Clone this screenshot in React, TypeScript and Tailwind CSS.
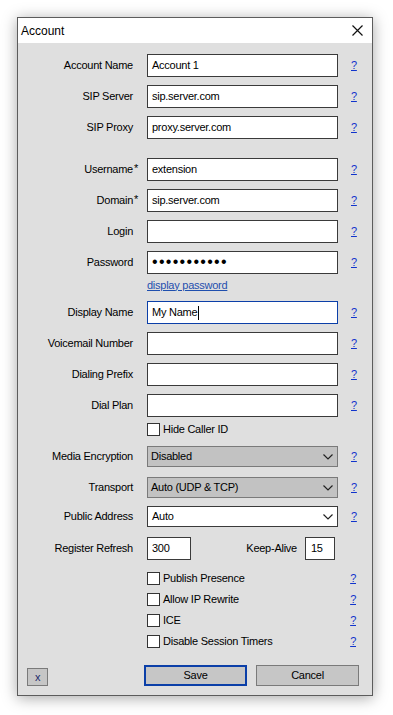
import React, { type ReactElement, type ReactNode } from "react";

const font = { fontFamily: '"Liberation Sans", Arial, sans-serif' };

const Help = (): ReactElement => (
  <span className="ml-[13px] text-[11px] text-[#1033cc] underline leading-none">?</span>
);

const Chevron = (): ReactElement => (
  <svg width="10" height="6" viewBox="0 0 10 6" className="ml-auto mr-[4px]">
    <polyline points="0.5,0.5 5,5 9.5,0.5" fill="none" stroke="#222" strokeWidth="1.2" />
  </svg>
);

const Label = ({ children }: { children: ReactNode }): ReactElement => (
  <div className="w-[115px] shrink-0 text-right">{children}</div>
);

const Field = ({
  label,
  value,
  star,
  mt,
}: {
  label: string;
  value?: ReactNode;
  star?: boolean;
  mt: string;
}): ReactElement => (
  <div className={`flex items-center h-[23px] ${mt}`}>
    <Label>
      {label}
      {star && <span className="absolute ml-[1px] -mt-[1px]">*</span>}
    </Label>
    <div className="ml-[14px] w-[191px] h-[23px] bg-white border border-[#3a3a3a] flex items-center px-[4px]">
      {value}
    </div>
    <Help />
  </div>
);

const Select = ({
  label,
  value,
  white,
  mt,
}: {
  label: string;
  value: string;
  white?: boolean;
  mt: string;
}): ReactElement => (
  <div className={`flex items-center h-[21px] ${mt}`}>
    <Label>{label}</Label>
    <div
      className={
        white
          ? "ml-[14px] w-[191px] h-[21px] bg-white border border-[#3a3a3a] flex items-center pl-[4px]"
          : "ml-[14px] w-[191px] h-[21px] bg-[#c2c2c2] border border-[#7a7a7a] flex items-center pl-[3px]"
      }
    >
      {value}
      <Chevron />
    </div>
    <Help />
  </div>
);

const Check = ({ label, help, mt }: { label: string; help?: boolean; mt?: string }): ReactElement => (
  <div className={`flex items-center h-[21px] pl-[129px] ${mt ?? ""}`}>
    <div className="w-[13px] h-[13px] bg-white border border-[#333]" />
    <span className="ml-[3px]">{label}</span>
    {help && (
      <span className="ml-auto mr-[16px] text-[11px] text-[#1033cc] underline leading-none">?</span>
    )}
  </div>
);

const App = (): ReactElement => {
  return (
    <div className="w-[393px] h-[715px] bg-white pt-[17px] pl-[17px]" style={font}>
      <div className="w-[356px] h-[679px] border border-[#5c5c5c] flex flex-col shadow-[0_2px_14px_rgba(0,0,0,0.35)] text-[11px] tracking-[-0.25px] text-black">
        <div className="h-[25px] bg-white flex items-center pl-[3px] pr-[9px]">
          <span className="text-[12px] tracking-normal">Account</span>
          <svg width="11" height="11" viewBox="0 0 11 11" className="ml-auto">
            <path d="M0.5 0.5 L10.5 10.5 M10.5 0.5 L0.5 10.5" stroke="#111" strokeWidth="1.2" />
          </svg>
        </div>
        <div className="flex-1 bg-[#dfdfdf] flex flex-col">
          <Field label="Account Name" value="Account 1" mt="mt-[11px]" />
          <Field label="SIP Server" value="sip.server.com" mt="mt-[8px]" />
          <Field label="SIP Proxy" value="proxy.server.com" mt="mt-[8px]" />

          <Field label="Username" star value="extension" mt="mt-[19px]" />
          <Field label="Domain" star value="sip.server.com" mt="mt-[8px]" />
          <Field label="Login" mt="mt-[8px]" />
          <Field
            label="Password"
            value={<span className="text-[16px] tracking-[1.3px] leading-none -mt-[1px]">•••••••••••</span>}
            mt="mt-[8px]"
          />
          <div className="mt-[4px] h-[14px] pl-[129px] flex items-center">
            <span className="text-[#1f4fae] underline">display password</span>
          </div>

          <div className="flex items-center h-[23px] mt-[9px]">
            <Label>Display Name</Label>
            <div className="ml-[14px] w-[191px] h-[23px] bg-white border border-[#0b3fa8] flex items-center px-[4px]">
              My Name
              <span className="ml-[1px] w-[1px] h-[14px] bg-black" />
            </div>
            <Help />
          </div>
          <Field label="Voicemail Number" mt="mt-[8px]" />
          <Field label="Dialing Prefix" mt="mt-[8px]" />
          <Field label="Dial Plan" mt="mt-[8px]" />
          <div className="mt-[4px] h-[17px] pl-[129px] flex items-center">
            <div className="w-[13px] h-[13px] bg-white border border-[#333]" />
            <span className="ml-[3px]">Hide Caller ID</span>
          </div>

          <Select label="Media Encryption" value="Disabled" mt="mt-[8px]" />
          <Select label="Transport" value="Auto (UDP & TCP)" mt="mt-[10px]" />
          <Select label="Public Address" value="Auto" white mt="mt-[8px]" />

          <div className="flex items-center h-[23px] mt-[10px]">
            <Label>Register Refresh</Label>
            <div className="ml-[14px] w-[44px] h-[23px] bg-white border border-[#3a3a3a] flex items-center px-[4px]">
              300
            </div>
            <span className="ml-auto">Keep-Alive</span>
            <div className="ml-[8px] mr-[37px] w-[30px] h-[23px] bg-white border border-[#3a3a3a] flex items-center px-[5px]">
              15
            </div>
          </div>

          <Check label="Publish Presence" help mt="mt-[8px]" />
          <Check label="Allow IP Rewrite" help />
          <Check label="ICE" help />
          <Check label="Disable Session Timers" help />

          <div className="flex items-end h-[21px] mt-[13px]">
            <div className="ml-[9px] w-[21px] h-[18px] bg-[#c6c6c6] border border-[#7a7a7a] flex items-center justify-center text-[#1b2a6b]">
              x
            </div>
            <div className="ml-[96px] w-[103px] h-[21px] bg-[#c6c6c6] border-2 border-[#0b3fa8] flex items-center justify-center">
              Save
            </div>
            <div className="ml-[9px] w-[103px] h-[21px] bg-[#c6c6c6] border border-[#7a7a7a] flex items-center justify-center">
              Cancel
            </div>
          </div>
        </div>
      </div>
    </div>
  );
};

export default App;
